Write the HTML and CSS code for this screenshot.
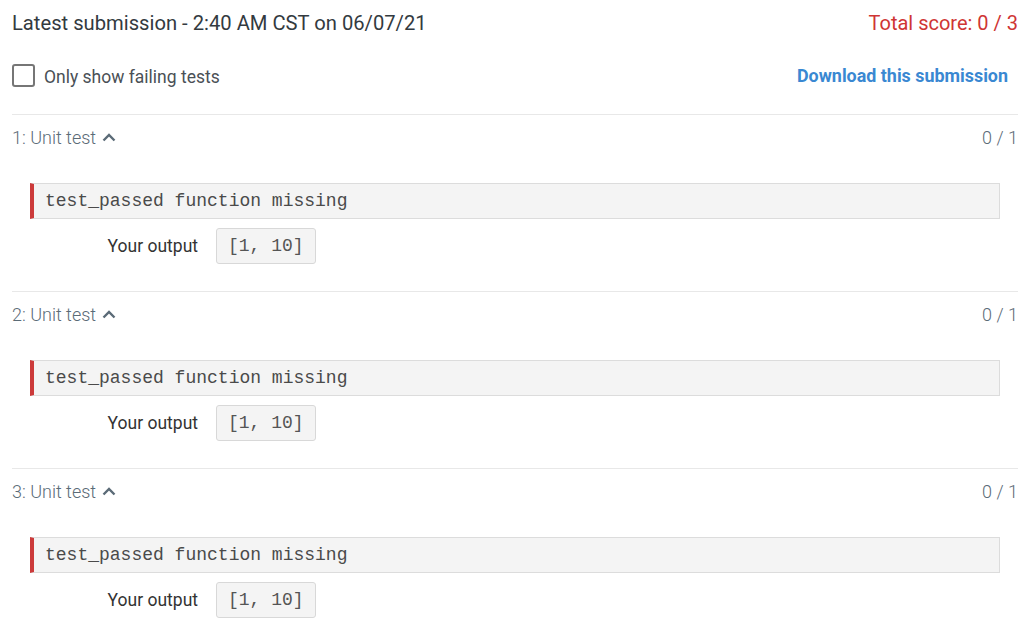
FILE: index.html
```html
<!DOCTYPE html>
<html lang="en">
<head>
<meta charset="utf-8">
<title>Latest submission</title>
<link rel="stylesheet" href="styles.css">
</head>
<body>
<div class="page">
  <div class="top-row">
    <div class="title">Latest submission - 2:40 AM CST on 06/07/21</div>
    <div class="total">Total score: 0 / 3</div>
  </div>
  <div class="filter-row">
    <label class="filter"><span class="checkbox"></span><span>Only show failing tests</span></label>
    <a class="download" href="#">Download this submission</a>
  </div>

  <div class="test">
    <div class="test-head">
      <div class="test-name">1: Unit test <svg class="chev" width="14" height="9" viewBox="0 0 14 9"><polyline points="1.5,7.5 7,2 12.5,7.5" fill="none" stroke="#5b6b77" stroke-width="2.4"/></svg></div>
      <div class="test-score">0 / 1</div>
    </div>
    <div class="msg">test_passed function missing</div>
    <div class="output-row"><span class="out-label">Your output</span><span class="out-val">[1, 10]</span></div>
  </div>

  <div class="test">
    <div class="test-head">
      <div class="test-name">2: Unit test <svg class="chev" width="14" height="9" viewBox="0 0 14 9"><polyline points="1.5,7.5 7,2 12.5,7.5" fill="none" stroke="#5b6b77" stroke-width="2.4"/></svg></div>
      <div class="test-score">0 / 1</div>
    </div>
    <div class="msg">test_passed function missing</div>
    <div class="output-row"><span class="out-label">Your output</span><span class="out-val">[1, 10]</span></div>
  </div>

  <div class="test">
    <div class="test-head">
      <div class="test-name">3: Unit test <svg class="chev" width="14" height="9" viewBox="0 0 14 9"><polyline points="1.5,7.5 7,2 12.5,7.5" fill="none" stroke="#5b6b77" stroke-width="2.4"/></svg></div>
      <div class="test-score">0 / 1</div>
    </div>
    <div class="msg">test_passed function missing</div>
    <div class="output-row"><span class="out-label">Your output</span><span class="out-val">[1, 10]</span></div>
  </div>
</div>
</body>
</html>
```
FILE: styles.css
```css
html, body {
  margin: 0;
  padding: 0;
  background: #ffffff;
}
body {
  font-family: Roboto, "Liberation Sans", sans-serif;
  color: #333333;
}
.page {
  padding: 10px 6px 0 12px;
}
.top-row {
  display: flex;
  justify-content: space-between;
  align-items: center;
  height: 26px;
}
.title {
  font-size: 20.2px;
  color: #333a40;
}
.total {
  font-size: 20px;
  color: #cf3534;
}
.filter-row {
  display: flex;
  justify-content: space-between;
  align-items: center;
  margin-top: 27px;
  height: 24px;
  padding-right: 10px;
}
.filter {
  display: flex;
  align-items: center;
  gap: 9px;
  font-size: 17.5px;
  color: #4a5056;
}
.filter span:last-child {
  padding-top: 3px;
}
.checkbox {
  width: 19px;
  height: 19px;
  border: 2px solid #767676;
  border-radius: 3px;
  box-sizing: content-box;
}
.download {
  font-size: 17.9px;
  font-weight: bold;
  color: #3a88d2;
  text-decoration: none;
}
.test {
  border-top: 1px solid #e8e8e8;
  margin-top: 27px;
  padding: 10px 0 27px 0;
}
.test + .test {
  margin-top: 0;
}
.test-head {
  display: flex;
  justify-content: space-between;
  align-items: center;
  height: 24px;
}
.test-name {
  font-size: 18px;
  color: #5b6b77;
  font-weight: 300;
  display: flex;
  align-items: center;
  gap: 6px;
}
.test-score {
  font-size: 18px;
  color: #5b6b77;
  font-weight: 300;
}
.msg {
  margin: 34px 18px 0 18px;
  background: #f4f4f4;
  border: 1px solid #dcdcdc;
  border-left: 4px solid #cc3b3b;
  padding: 0 11px;
  height: 34px;
  line-height: 34px;
  font-family: "Liberation Mono", "Courier New", monospace;
  font-size: 18px;
  color: #4a4a4a;
}
.output-row {
  display: flex;
  align-items: center;
  gap: 18px;
  margin-top: 9px;
}
.out-label {
  width: 186px;
  text-align: right;
  font-size: 17.5px;
  color: #333333;
}
.out-val {
  background: #f4f4f4;
  border: 1px solid #d8d8d8;
  border-radius: 3px;
  height: 34px;
  line-height: 34px;
  padding: 0 11px;
  font-family: "Liberation Mono", "Courier New", monospace;
  font-size: 18px;
  color: #555555;
}
```
